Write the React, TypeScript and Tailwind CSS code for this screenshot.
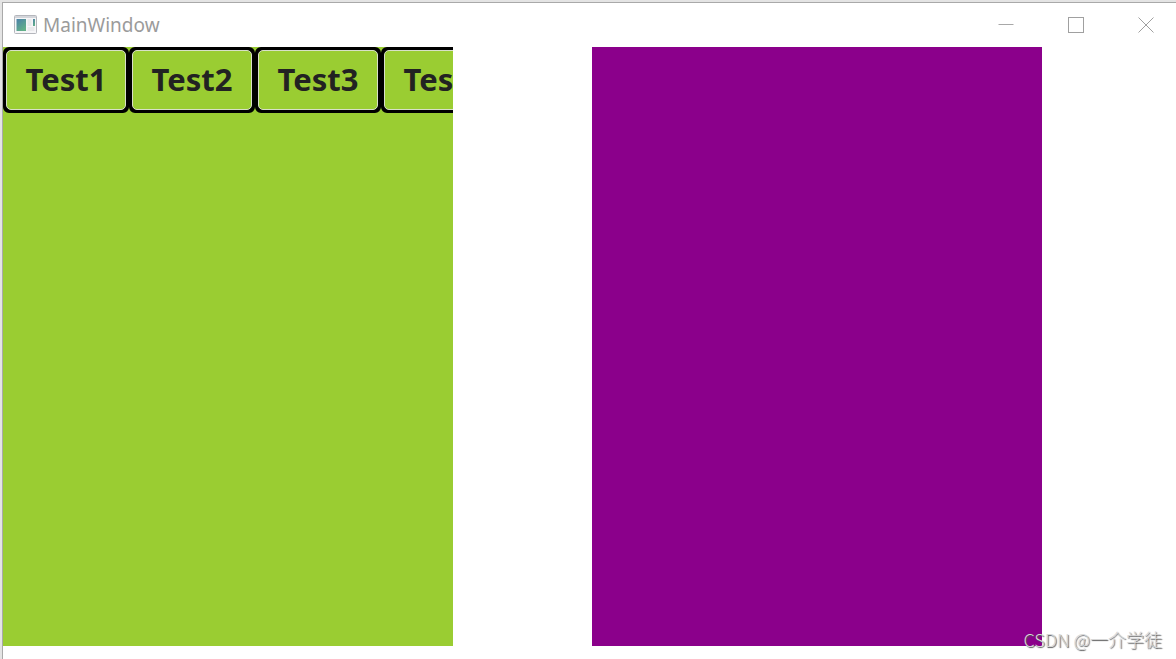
const tabs = ['Test1', 'Test2', 'Test3', 'Test4']

function AppIcon() {
    return (
        <svg width="24" height="20" viewBox="0 0 24 20" aria-hidden="true">
            <defs>
                <linearGradient id="pane" x1="0" y1="0" x2="0.6" y2="1">
                    <stop offset="0" stopColor="#4a80a8" />
                    <stop offset="1" stopColor="#62b088" />
                </linearGradient>
            </defs>
            <rect x="0.5" y="0.5" width="22" height="18" rx="1" fill="#f6f6f8" stroke="#b4b6bc" />
            <rect x="1" y="1" width="21" height="2" fill="#d3d5da" />
            <rect x="2.5" y="4" width="9.5" height="12" fill="url(#pane)" />
            <rect x="13.5" y="4" width="4" height="7" fill="#e9e9ec" />
            <rect x="13.5" y="12" width="7" height="4" fill="#e9e9ec" />
            <rect x="19" y="4" width="2" height="7" fill="url(#pane)" />
        </svg>
    )
}

function TitleBar() {
    return (
        <header className="flex h-11 items-center justify-between pb-px pl-[11px] text-[#9b9b9b]">
            <div className="flex items-center gap-[5px]">
                <AppIcon />
                <h1 className="text-[19px] leading-6">MainWindow</h1>
            </div>
            <div className="flex h-full gap-[10px]">
                <button type="button" aria-label="Minimize" className="flex w-[60px] items-center justify-center">
                    <svg width="16" height="16" viewBox="0 0 16 16" stroke="#a8a8a8">
                        <path d="M0.5 7.5H15.5" />
                    </svg>
                </button>
                <button type="button" aria-label="Maximize" className="flex w-[60px] items-center justify-center">
                    <svg width="16" height="16" viewBox="0 0 16 16" fill="none" stroke="#a0a0a0">
                        <rect x="0.5" y="0.5" width="15" height="15" />
                    </svg>
                </button>
                <button type="button" aria-label="Close" className="flex w-[60px] items-center justify-center">
                    <svg width="16" height="16" viewBox="0 0 16 16" stroke="#a0a0a0">
                        <path d="M0.5 0.5L15.5 15.5M15.5 0.5L0.5 15.5" />
                    </svg>
                </button>
            </div>
        </header>
    )
}

export default function App() {
    return (
        <div className="flex min-h-screen flex-col bg-[#e4e4e4] pt-[2px] pl-[2px] font-['Noto_Sans','Noto_Sans_CJK_SC',sans-serif]">
            <div className="relative flex flex-1 flex-col border-t border-l border-[#a9a9a9] bg-white">
                <TitleBar />
                <main className="flex flex-1 gap-[139px] pr-[134px] pb-[13px]">
                    <section className="flex min-w-0 flex-1 items-start overflow-hidden bg-[#9acd32]">
                        {tabs.map((tab) => (
                            <button
                                key={tab}
                                type="button"
                                className="h-[66px] w-[126px] shrink-0 rounded-md border-3 border-black bg-black"
                            >
                                <span className="flex h-full items-center justify-center rounded-[5px] border border-[#d8e0c8] bg-[#9acd32] pb-[2px] text-[31px] font-bold text-[#222]">
                                    {tab}
                                </span>
                            </button>
                        ))}
                    </section>
                    <section className="min-w-0 flex-1 bg-[#8b008b]" />
                </main>
                <p className="absolute right-[14px] bottom-[8px] font-['Noto_Sans_CJK_SC',sans-serif] text-[18px] leading-6 font-light text-[#d6d6d6] [text-shadow:1px_1px_1px_#555]">
                    CSDN @一介学徒
                </p>
            </div>
        </div>
    )
}
